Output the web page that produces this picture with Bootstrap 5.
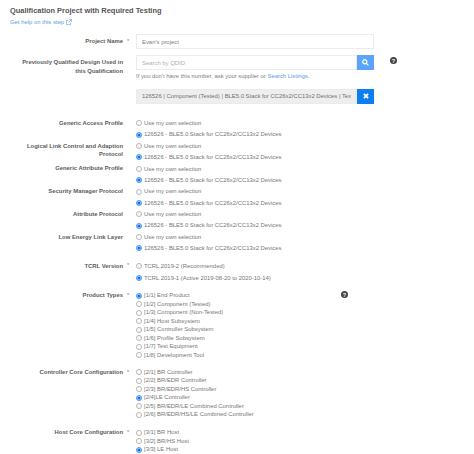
<!DOCTYPE html>
<html lang="en"><head><meta charset="utf-8"><title>Qualification Project</title>
<link href="https://cdn.jsdelivr.net/npm/bootstrap@5.3.0/dist/css/bootstrap.min.css" rel="stylesheet">
<style>
html,body{height:454px;overflow:hidden;background:#fff}
body{font-family:"Liberation Sans",Arial,sans-serif;font-size:5.9px;line-height:8.5px;color:#777}
.pg{padding:5.5px 0 0 10px;width:474px}
.ttl{font-size:7.45px;font-weight:700;line-height:10px;color:#555;margin:0 0 2px}
.hlp{display:block;color:#5b9ae6;text-decoration:none;line-height:9px;margin-bottom:7.5px}
.frow{display:flex}
.lbl{width:113px;flex:none;text-align:right;font-weight:700;color:#5c5c5c;line-height:8.6px}
.top3{padding-top:3px}
.star{width:13px;flex:none;color:#d9534f;padding-left:4px}
.ctl{width:238px;flex:none}
.fld{display:block;width:100%;height:15px;border:1px solid #ebebeb;background:#fff;padding:0 5px;font-size:5.9px;line-height:13px;color:#808080;border-radius:0}
.fld::placeholder{color:#b0b0b0}
.grp{display:flex;height:15px}
.grp .fld{flex:1;min-width:0;width:auto}
.sel{background:#eee;color:#707070}
.clip{display:block;white-space:nowrap;overflow:hidden}
.bt{flex:none;width:17px;height:15px;border:0;padding:0;display:flex;align-items:center;justify-content:center;border-radius:0}
.b1{background:#5aa5fb}.b2{background:#0d7ef2}
.tip{margin-top:2px;margin-bottom:7.5px;line-height:9px;color:#808080}
.tip a{color:#5b9ae6;text-decoration:none}
.qm{flex:none;margin:2px 0 0 15.5px;width:7px;height:7px}
.qm2{margin:0 0 0 -33px}
.opts{display:flex;flex-direction:column}
.opt{display:flex;align-items:center;height:8.5px;color:#777;white-space:nowrap;gap:2px}
.wide .opt{height:11.4px}
.wide .lbl{padding-top:1.4px}
.dot{width:6px;height:6px;border:.6px solid #b5b5b5;border-radius:50%;flex:none;background:#fff}
.dot.on{border:1.3px solid #5aa5fb;background:#0d6fdc;box-shadow:inset 0 0 0 .4px #fff}
.m6{margin-top:6px}
.gr1{margin-top:14px}
.g0{margin-top:6.5px}.g1{margin-top:8px}.g2{margin-top:8.5px}.g3{margin-top:9.5px}
</style></head><body>
<div class="pg">
<h1 class="ttl">Qualification Project with Required Testing</h1>
<a class="hlp" href="#">Get help on this step <svg width="6" height="6" viewBox="0 0 8 8" fill="none" stroke="#5b9ae6" stroke-width=".8"><path d="M6 5v2.5H.5V2H3M4 .5h3.5V4M7.5 .5 3.5 4.5"/></svg></a>
<div class="frow"><div class="lbl top3">Project Name</div><div class="star top3">*</div><div class="ctl"><input class="fld" value="Evan's project"></div></div>
<div class="frow m6"><div class="lbl top3">Previously Qualified Design Used in<br>this Qualification</div><div class="star"></div>
<div class="ctl"><div class="grp"><input class="fld" placeholder="Search by QDID"><button class="bt b1" aria-label="Search"><svg width="7" height="7" viewBox="0 0 10 10" fill="none" stroke="#fff" stroke-width="1.7"><circle cx="4" cy="4" r="3"/><path d="m6.2 6.2 3 3"/></svg></button></div>
<div class="tip">If you don't have this number, ask your supplier or <a href="#">Search Listings</a>.</div>
<div class="grp"><div class="fld sel"><span class="clip">126526 | Component (Tested) | BLE5.0 Stack for CC26x2/CC13x2 Devices | Texas Instruments</span></div><button class="bt b2" aria-label="Remove"><svg width="6" height="6" viewBox="0 0 10 10" stroke="#fff" stroke-width="3"><path d="M1.5 1.5l7 7M8.5 1.5l-7 7"/></svg></button></div></div>
<svg class="qm" viewBox="0 0 10 10"><circle cx="5" cy="5" r="5" fill="#444"/><text x="5" y="8" font-size="8" font-weight="700" text-anchor="middle" fill="#fff" font-family="Liberation Sans">?</text></svg></div>

<div class="wide gr1">
<div class="frow"><div class="lbl">Generic Access Profile</div><div class="star"></div><div class="opts"><div class="opt"><span class="dot"></span>Use my own selection</div><div class="opt"><span class="dot on"></span>126526 - BLE5.0 Stack for CC26x2/CC13x2 Devices</div></div></div>
<div class="frow"><div class="lbl">Logical Link Control and Adaption Protocol</div><div class="star"></div><div class="opts"><div class="opt"><span class="dot"></span>Use my own selection</div><div class="opt"><span class="dot on"></span>126526 - BLE5.0 Stack for CC26x2/CC13x2 Devices</div></div></div>
<div class="frow"><div class="lbl">Generic Attribute Profile</div><div class="star"></div><div class="opts"><div class="opt"><span class="dot"></span>Use my own selection</div><div class="opt"><span class="dot on"></span>126526 - BLE5.0 Stack for CC26x2/CC13x2 Devices</div></div></div>
<div class="frow"><div class="lbl">Security Manager Protocol</div><div class="star"></div><div class="opts"><div class="opt"><span class="dot"></span>Use my own selection</div><div class="opt"><span class="dot on"></span>126526 - BLE5.0 Stack for CC26x2/CC13x2 Devices</div></div></div>
<div class="frow"><div class="lbl">Attribute Protocol</div><div class="star"></div><div class="opts"><div class="opt"><span class="dot"></span>Use my own selection</div><div class="opt"><span class="dot on"></span>126526 - BLE5.0 Stack for CC26x2/CC13x2 Devices</div></div></div>
<div class="frow"><div class="lbl">Low Energy Link Layer</div><div class="star"></div><div class="opts"><div class="opt"><span class="dot"></span>Use my own selection</div><div class="opt"><span class="dot on"></span>126526 - BLE5.0 Stack for CC26x2/CC13x2 Devices</div></div></div>
<div class="frow g0"><div class="lbl">TCRL Version</div><div class="star">*</div><div class="opts"><div class="opt"><span class="dot"></span>TCRL 2019-2 (Recommended)</div><div class="opt"><span class="dot on"></span>TCRL 2019-1 (Active 2019-08-20 to 2020-10-14)</div></div></div>
</div>

<div class="frow g1"><div class="lbl">Product Types</div><div class="star">*</div><div class="opts ctl"><div class="opt"><span class="dot on"></span>[1/1] End Product</div><div class="opt"><span class="dot"></span>[1/2] Component (Tested)</div><div class="opt"><span class="dot"></span>[1/3] Component (Non-Tested)</div><div class="opt"><span class="dot"></span>[1/4] Host Subsystem</div><div class="opt"><span class="dot"></span>[1/5] Controller Subsystem</div><div class="opt"><span class="dot"></span>[1/6] Profile Subsystem</div><div class="opt"><span class="dot"></span>[1/7] Test Equipment</div><div class="opt"><span class="dot"></span>[1/8] Development Tool</div></div><svg class="qm qm2" viewBox="0 0 10 10"><circle cx="5" cy="5" r="5" fill="#444"/><text x="5" y="8" font-size="8" font-weight="700" text-anchor="middle" fill="#fff" font-family="Liberation Sans">?</text></svg></div>
<div class="frow g2"><div class="lbl">Controller Core Configuration</div><div class="star">*</div><div class="opts"><div class="opt"><span class="dot"></span>[2/1] BR Controller</div><div class="opt"><span class="dot"></span>[2/2] BR/EDR Controller</div><div class="opt"><span class="dot"></span>[2/3] BR/EDR/HS Controller</div><div class="opt"><span class="dot on"></span>[2/4]LE Controller</div><div class="opt"><span class="dot"></span>[2/5] BR/EDR/LE Combined Controller</div><div class="opt"><span class="dot"></span>[2/6] BR/EDR/HS/LE Combined Controller</div></div></div>
<div class="frow g3"><div class="lbl">Host Core Configuration</div><div class="star">*</div><div class="opts"><div class="opt"><span class="dot"></span>[3/1] BR Host</div><div class="opt"><span class="dot"></span>[3/2] BR/HS Host</div><div class="opt"><span class="dot on"></span>[3/3] LE Host</div></div></div>
</div>
<script src="https://cdn.jsdelivr.net/npm/bootstrap@5.3.0/dist/js/bootstrap.bundle.min.js"></script>
</body></html>
